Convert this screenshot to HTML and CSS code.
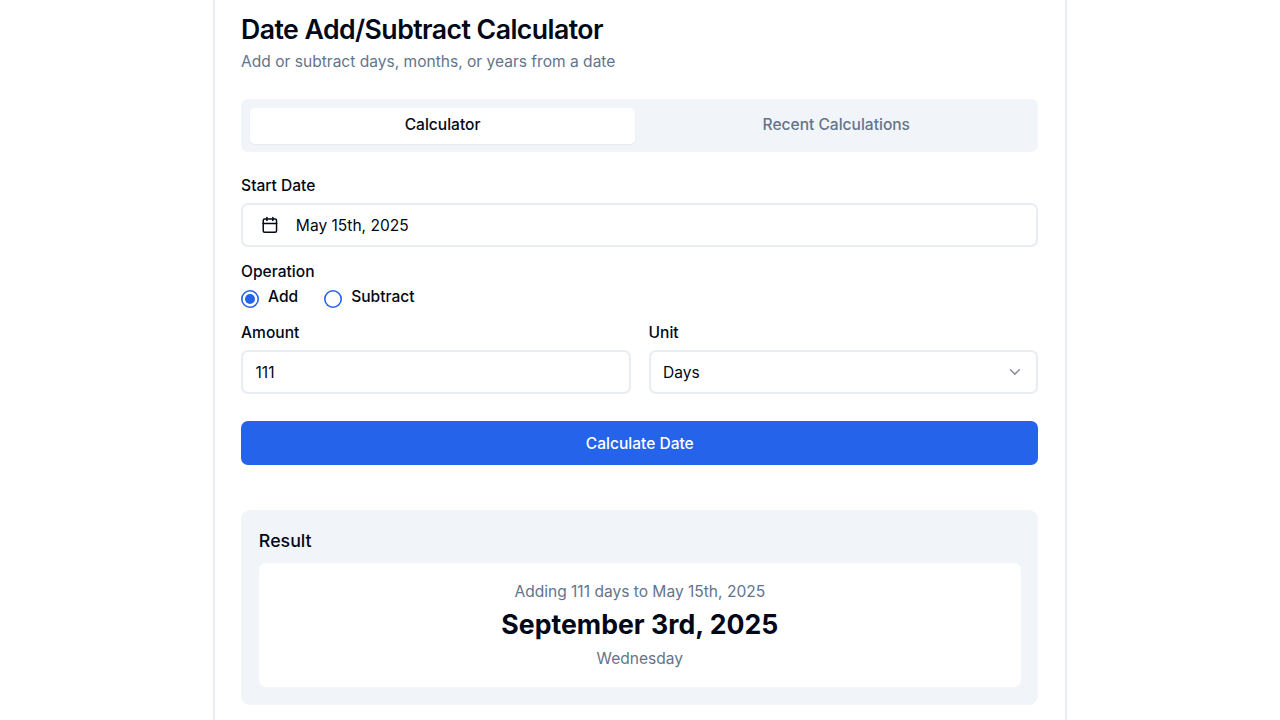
FILE: index.html
```html
<!DOCTYPE html>
<html lang="en">
<head>
<meta charset="utf-8">
<title>Date Add/Subtract Calculator</title>
<link rel="stylesheet" href="styles.css">
</head>
<body>
<main class="card">
  <h1 class="title">Date Add/Subtract Calculator</h1>
  <p class="subtitle">Add or subtract days, months, or years from a date</p>
  <div class="tabs">
    <div class="tab tab-active">Calculator</div>
    <div class="tab">Recent Calculations</div>
  </div>
  <div class="label start-label">Start Date</div>
  <div class="field date-field">
    <svg class="cal" viewBox="0 0 24 24" width="17.78" height="17.78" fill="none" stroke="currentColor" stroke-width="2" stroke-linecap="round" stroke-linejoin="round"><path d="M8 2v4"/><path d="M16 2v4"/><rect x="3" y="4" width="18" height="18" rx="2"/><path d="M3 10h18"/></svg>
    <span>May 15th, 2025</span>
  </div>
  <div class="label op-label">Operation</div>
  <div class="radios">
    <div class="radio-item"><span class="radio radio-on"></span><span class="radio-text">Add</span></div>
    <div class="radio-item"><span class="radio"></span><span class="radio-text">Subtract</span></div>
  </div>
  <div class="cols">
    <div class="col">
      <div class="label">Amount</div>
      <div class="field plain">111</div>
    </div>
    <div class="col">
      <div class="label">Unit</div>
      <div class="field plain select">
        <span>Days</span>
        <svg class="chev" viewBox="0 0 24 24" width="17.78" height="17.78" fill="none" stroke="currentColor" stroke-width="2" stroke-linecap="round" stroke-linejoin="round"><path d="m6 9 6 6 6-6"/></svg>
      </div>
    </div>
  </div>
  <div class="button">Calculate Date</div>
  <section class="result">
    <h2 class="result-title">Result</h2>
    <div class="result-box">
      <p class="result-desc">Adding 111 days to May 15th, 2025</p>
      <p class="result-date">September 3rd, 2025</p>
      <p class="result-day">Wednesday</p>
    </div>
  </section>
</main>
</body>
</html>
```
FILE: styles.css
```css
* { box-sizing: border-box; }
html, body { margin: 0; height: 720px; overflow: hidden; background: #fff; }
body { font-family: Inter, "Noto Sans", sans-serif; color: #020817; font-size: 15.56px; }
.card { width: 853.33px; margin: 0 auto; padding: 11px 26.2px 0 25.78px; border-left: 2px solid #e8edf4; border-right: 2px solid #e8edf4; min-height: 720px; }
.title { margin: 0; font-size: 26.67px; line-height: 36px; font-weight: 600; letter-spacing: -0.56px; }
.subtitle { margin: 4px 0 0; font-size: 15.56px; line-height: 22px; color: #64748b; }
.tabs { display: flex; gap: 8px; margin-top: 26px; height: 53.33px; padding: 9px; background: #f1f5f9; border-radius: 7px; }
.tab { flex: 1; height: 35.56px; padding-bottom: 3px; display: flex; align-items: center; justify-content: center; font-weight: 500; color: #64748b; border-radius: 5px; }
.tab-active { flex: 0 0 385px; background: #fff; color: #020817; box-shadow: 0 1px 2px rgba(0,0,0,.05); }
.label { line-height: 22px; font-weight: 500; }
.start-label { margin-top: 22.67px; }
.field { height: 44.44px; margin-top: 6px; border: 2px solid #e8edf4; border-radius: 7px; display: flex; align-items: center; background: #fff; }
.date-field { gap: 17px; padding-left: 18px; }
.cal { flex: none; }
.plain { padding: 0 12.5px 0 12.44px; }
.select { justify-content: space-between; }
.chev { color: #8a8f98; }
.op-label { margin-top: 13.56px; }
.radios { display: flex; gap: 26px; margin-top: 3px; height: 24px; }
.radio-item { display: flex; gap: 9px; align-items: flex-start; font-weight: 500; line-height: 22px; }
.radio { width: 18px; height: 18px; margin-top: 4px; box-shadow: inset 0 0 0 1.6px #2563eb; border-radius: 50%; display: flex; align-items: center; justify-content: center; }
.radio-on::after { content: ""; width: 10px; height: 10px; border-radius: 50%; background: #2563eb; }
.cols { display: grid; grid-template-columns: 1fr 1fr; gap: 17.6px; margin-top: 12px; }
.button { height: 44.44px; margin-top: 26.56px; border-radius: 7px; background: #2563eb; color: #fff; display: flex; align-items: center; justify-content: center; font-weight: 500; }
.result { margin-top: 44.56px; height: 195px; padding: 17.78px; background: #f1f5f9; border-radius: 9px; }
.result-title { margin: 0; font-size: 17.78px; line-height: 26px; font-weight: 500; }
.result-box { margin-top: 9px; height: 124px; padding-top: 18px; background: #fff; border-radius: 7px; text-align: center; }
.result-box p { margin: 0; }
.result-desc { line-height: 22px; color: #64748b; }
.result-box .result-date { font-size: 26.67px; line-height: 36px; font-weight: 700; margin-top: 3px; }
.result-box .result-day { line-height: 22px; color: #64748b; margin-top: 6px; }
```
